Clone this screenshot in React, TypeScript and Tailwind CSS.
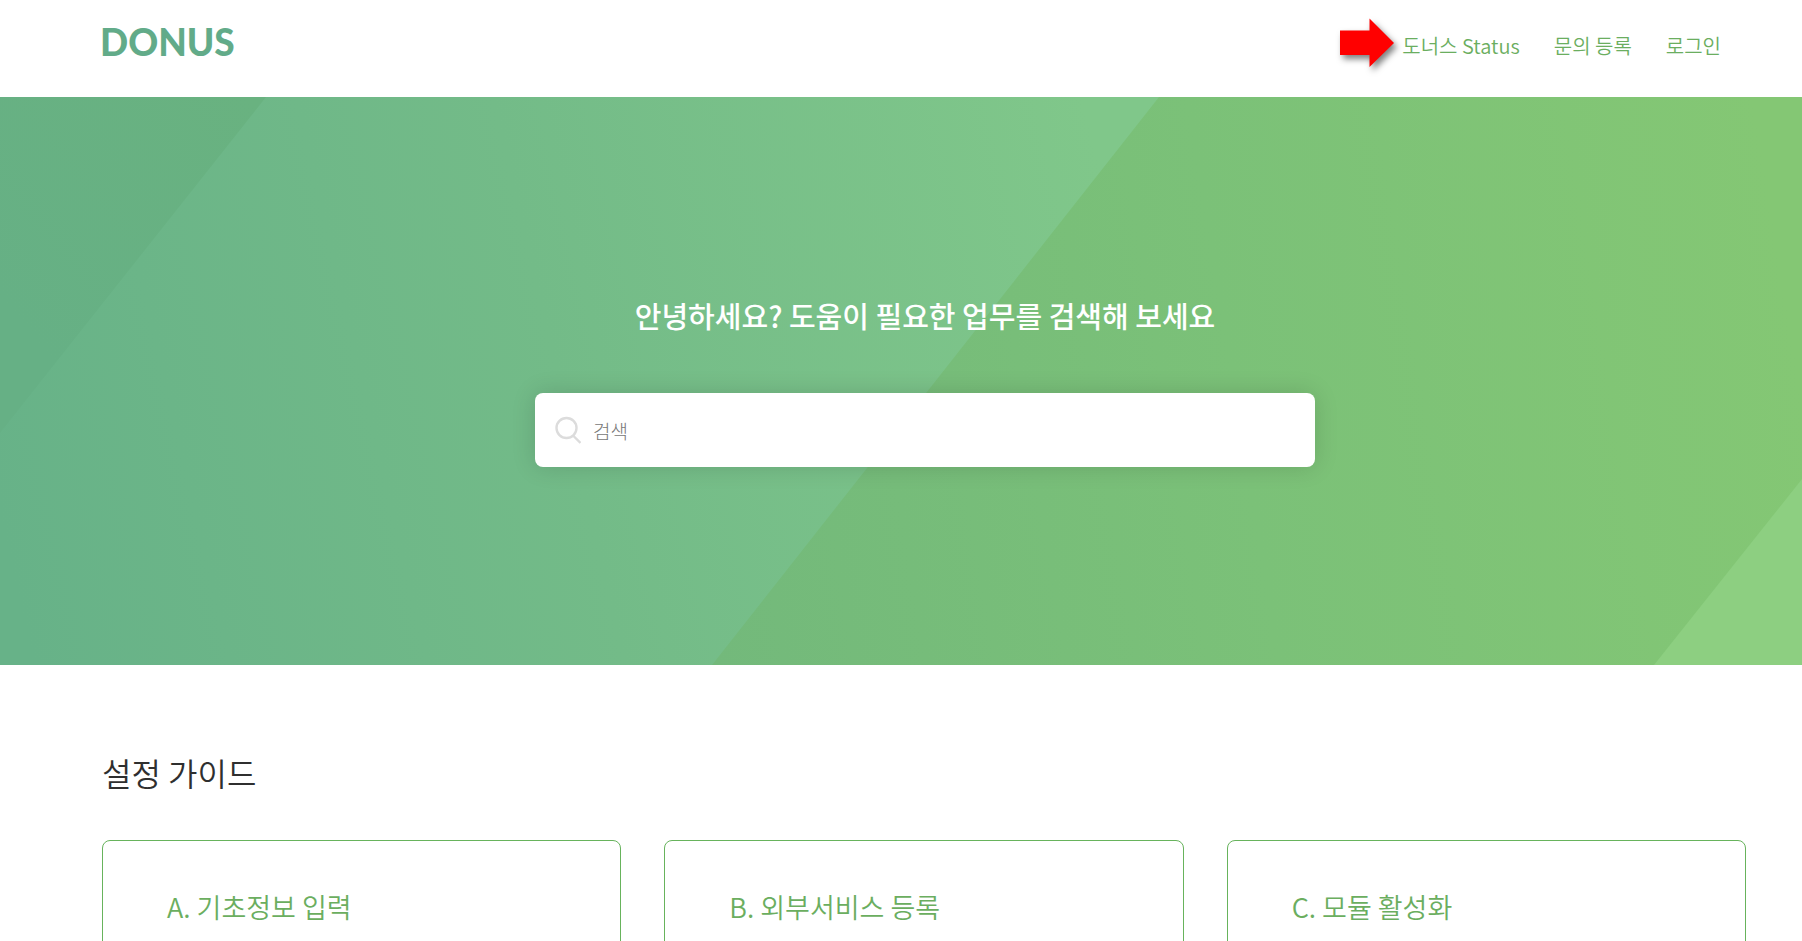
import type { ReactNode } from "react";

interface NavItem {
  label: string;
  href: string;
}

const navItems: NavItem[] = [
  { label: "도너스 Status", href: "#status" },
  { label: "문의 등록", href: "#request" },
  { label: "로그인", href: "#login" },
];

const guides = ["A. 기초정보 입력", "B. 외부서비스 등록", "C. 모듈 활성화"];

// Red marker pointing at the first menu item
const PointerArrow = () => (
  <svg
    width="54"
    height="50"
    viewBox="0 0 54 50"
    aria-hidden="true"
    className="overflow-visible drop-shadow-[3px_4px_3px_rgba(0,0,0,0.5)]"
  >
    <path d="M0 12.5H29.5V0.5L54 25L29.5 49V37H0Z" fill="#ff0000" />
  </svg>
);

const SearchIcon = () => (
  <svg width="26" height="28" viewBox="0 0 26 28" fill="none" stroke="#dcdcdc" strokeWidth="2.4" aria-hidden="true">
    <circle cx="11.5" cy="12" r="10" />
    <path d="M18 19.5L25.5 27" />
  </svg>
);

// Diagonal gradient bands behind the search area
const HeroBackground = () => (
  <svg
    className="absolute inset-0 size-full"
    viewBox="0 0 1802 568"
    preserveAspectRatio="none"
    aria-hidden="true"
  >
    <defs>
      <linearGradient id="base" gradientUnits="userSpaceOnUse" x1="700" y1="480" x2="1802" y2="300">
        <stop offset="0" stopColor="#73b97b" />
        <stop offset="0.5" stopColor="#7bc178" />
        <stop offset="1" stopColor="#84c774" />
      </linearGradient>
      <linearGradient id="middle" gradientUnits="userSpaceOnUse" x1="0" y1="420" x2="1120" y2="160">
        <stop offset="0" stopColor="#67b288" />
        <stop offset="0.5" stopColor="#73bb88" />
        <stop offset="1" stopColor="#80c78a" />
      </linearGradient>
      <linearGradient id="corner" gradientUnits="userSpaceOnUse" x1="0" y1="200" x2="250" y2="0">
        <stop offset="0" stopColor="#66b085" />
        <stop offset="1" stopColor="#69b280" />
      </linearGradient>
    </defs>
    <path d="M0 0H1802V568H0Z" fill="url(#base)" />
    <path d="M0 0H1159L712 568H0Z" fill="url(#middle)" />
    <path d="M0 0H266L0 336Z" fill="url(#corner)" />
    <path d="M1802 382V568H1654Z" fill="#8dcf81" />
  </svg>
);

const GuideCard = ({ children }: { children: ReactNode }) => (
  <a
    href="#guide"
    className="block min-h-56 rounded-lg border border-[#67b35c] px-16 py-[46px] text-[27px] leading-10 text-[#6bae5f]"
  >
    {children}
  </a>
);

const App = () => {
  return (
    <div className="h-screen overflow-hidden bg-white font-['Noto_Sans_CJK_KR',sans-serif] font-[350] text-[#2f2f2f]">
      <header className="flex h-[97px] items-start justify-between pr-[81px] pl-[100px]">
        <a href="#home" className="pt-[19px] font-['Lato',sans-serif] text-[37px] leading-[46px] font-black text-[#62ab89]">
          DONUS
        </a>
        <nav className="flex items-center gap-[34px] pt-[18px] text-xl text-[#6bae5f]">
          <div className="flex items-center gap-2">
            <PointerArrow />
            <a href={navItems[0].href} className="pt-1.5">
              {navItems[0].label}
            </a>
          </div>
          {navItems.slice(1).map((item) => (
            <a key={item.label} href={item.href} className="pt-1.5">
              {item.label}
            </a>
          ))}
        </nav>
      </header>

      <section className="relative h-[568px]">
        <HeroBackground />
        <div className="relative flex flex-col items-center pt-[198px] pr-[54px] pl-[102px]">
          <h1 className="text-[29px] leading-10 font-medium text-white">
            안녕하세요? 도움이 필요한 업무를 검색해 보세요
          </h1>
          <label className="mt-[58px] flex h-[74px] w-full max-w-[780px] items-center gap-3 rounded-lg bg-white px-5 shadow-[0_0_24px_rgba(0,0,0,0.14)]">
            <SearchIcon />
            <input
              type="search"
              placeholder="검색"
              aria-label="검색"
              className="min-w-0 flex-1 bg-transparent pt-0.5 text-[19px] font-light outline-none placeholder:text-[#777777]"
            />
          </label>
        </div>
      </section>

      <main className="pt-20 pr-14 pl-[102px]">
        <h2 className="text-[32px] leading-[55px]">설정 가이드</h2>
        <div className="mt-10 grid grid-cols-3 gap-[43px]">
          {guides.map((guide) => (
            <GuideCard key={guide}>{guide}</GuideCard>
          ))}
        </div>
      </main>
    </div>
  );
};

export default App;
